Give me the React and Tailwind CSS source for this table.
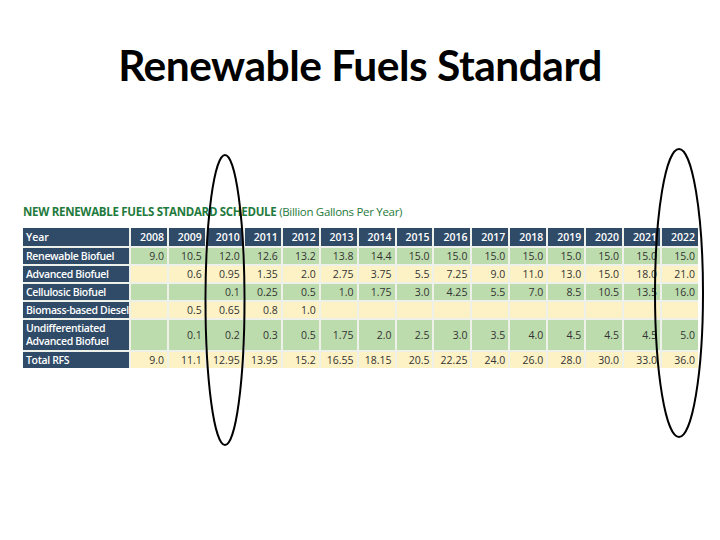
import React from 'react';

const years = ['2008','2009','2010','2011','2012','2013','2014','2015','2016','2017','2018','2019','2020','2021','2022'];

const rows = [
  { label: 'Renewable Biofuel', bg: 'bg-[#bddcae]', h: 'h-[16px]', vals: ['9.0','10.5','12.0','12.6','13.2','13.8','14.4','15.0','15.0','15.0','15.0','15.0','15.0','15.0','15.0'] },
  { label: 'Advanced Biofuel', bg: 'bg-[#fdf2c6]', h: 'h-[16px]', vals: ['','0.6','0.95','1.35','2.0','2.75','3.75','5.5','7.25','9.0','11.0','13.0','15.0','18.0','21.0'] },
  { label: 'Cellulosic Biofuel', bg: 'bg-[#bddcae]', h: 'h-[16px]', vals: ['','','0.1','0.25','0.5','1.0','1.75','3.0','4.25','5.5','7.0','8.5','10.5','13.5','16.0'] },
  { label: 'Biomass-based Diesel', bg: 'bg-[#fdf2c6]', h: 'h-[16px]', vals: ['','0.5','0.65','0.8','1.0','','','','','','','','','',''] },
  { label: ['Undifferentiated', 'Advanced Biofuel'], bg: 'bg-[#bddcae]', h: 'h-[30px]', vals: ['','0.1','0.2','0.3','0.5','1.75','2.0','2.5','3.0','3.5','4.0','4.5','4.5','4.5','5.0'] },
  { label: 'Total RFS', bg: 'bg-[#fdf2c6]', h: 'h-[16px]', vals: ['9.0','11.1','12.95','13.95','15.2','16.55','18.15','20.5','22.25','24.0','26.0','28.0','30.0','33.0','36.0'] },
];

export default function App() {
  return (
    <div className="relative w-[720px] h-[540px] bg-white overflow-hidden">
      <h1 className="pt-[36px] text-center text-[42.5px] leading-[58px] font-bold text-black tracking-[-0.5px]" style={{ fontFamily: 'Lato, "Open Sans", sans-serif' }}>
        Renewable Fuels Standard
      </h1>

      <div className="mt-[110px] ml-[23px] w-[675px]" style={{ fontFamily: '"Open Sans", "Noto Sans", sans-serif' }}>
        <div className="text-[11.5px] leading-[16px] text-[#1f7a3d] tracking-[-0.3px] mb-[8px] whitespace-nowrap">
          <span className="font-bold">NEW RENEWABLE FUELS STANDARD SCHEDULE</span>{' '}
          <span>(Billion Gallons Per Year)</span>
        </div>

        <div className="grid grid-cols-[106px_repeat(15,1fr)] gap-[2px] bg-[#eef0ea] text-[10.5px] leading-[13px]">
          <div className="h-[18px] bg-[#304b68] text-white font-semibold flex items-center pl-[3px]">Year</div>
          {years.map((y) => (
            <div key={y} className="h-[18px] bg-[#304b68] text-white font-semibold flex items-center justify-end pr-[3px]">{y}</div>
          ))}
          {rows.map((r, i) => (
            <React.Fragment key={i}>
              <div className={`${r.h} bg-[#304b68] text-white font-semibold tracking-[-0.35px] whitespace-nowrap flex flex-col justify-center pl-[3px]`}>
                {Array.isArray(r.label) ? r.label.map((l) => <span key={l}>{l}</span>) : r.label}
              </div>
              {r.vals.map((v, j) => (
                <div key={j} className={`${r.h} ${r.bg} text-[#333] flex items-center justify-end pr-[3px]`}>{v}</div>
              ))}
            </React.Fragment>
          ))}
        </div>
      </div>

      <svg className="absolute left-0 top-0" width="720" height="540" viewBox="0 0 720 540">
        <ellipse cx="225" cy="300" rx="19.5" ry="145" fill="none" stroke="#000" strokeWidth="2" />
        <ellipse cx="679" cy="293" rx="24" ry="144" fill="none" stroke="#000" strokeWidth="2" />
      </svg>
    </div>
  );
}
